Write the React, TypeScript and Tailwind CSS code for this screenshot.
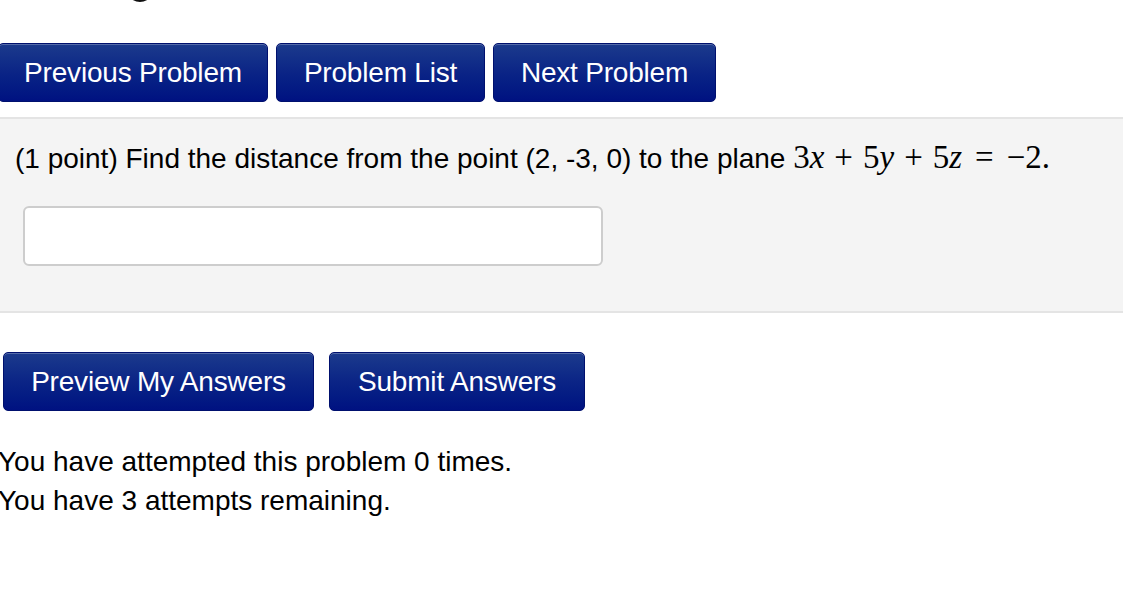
import React from "react";

const btn =
  "h-[59px] rounded-[5px] border border-[#00106e] bg-gradient-to-b from-[#1c3a8c] via-[#0b2486] to-[#001181] text-white text-[28px] leading-none tracking-[-0.2px] shadow-[inset_0_1px_0_rgba(255,255,255,0.25)]";

export default function App() {
  return (
    <div className="w-[1123px] h-[615px] bg-white overflow-hidden font-['Liberation_Sans',Arial,sans-serif] text-black">
      <div className="h-[43px] relative">
        <svg className="absolute left-[128px] top-[-6px]" width="24" height="10" viewBox="0 0 24 10">
          <path d="M3 3 Q12 10 21 3" stroke="#111" strokeWidth="3" fill="none" />
        </svg>
      </div>
      <div className="flex gap-[8px] ml-[-2px]">
        <button className={`${btn} w-[270px]`}>Previous Problem</button>
        <button className={`${btn} w-[209px]`}>Problem List</button>
        <button className={`${btn} w-[223px]`}>Next Problem</button>
      </div>
      <div className="mt-[15px] h-[196px] bg-[#f4f4f4] border-t-2 border-b-2 border-[#e4e4e4] px-[15px] pt-[20px]">
        <p className="text-[28px] leading-[36px] flex items-baseline">
          <span>(1 point) Find the distance from the point (2, -3, 0) to the plane&nbsp;</span>
          <span className="font-['Liberation_Serif','Times_New_Roman',serif] text-[33px] flex items-baseline">
            <span>3<i>x</i></span>
            <span className="mx-[10px]">+</span>
            <span>5<i>y</i></span>
            <span className="mx-[10px]">+</span>
            <span>5<i>z</i></span>
            <span className="mx-[13px]">=</span>
            <span>−2.</span>
          </span>
        </p>
        <div className="mt-[29px] ml-[8px] w-[580px] h-[60px] bg-white border-2 border-[#cdcdcd] rounded-[6px]"></div>
      </div>
      <div className="flex gap-[15px] ml-[3px] mt-[39px]">
        <button className={`${btn} w-[311px]`}>Preview My Answers</button>
        <button className={`${btn} w-[256px]`}>Submit Answers</button>
      </div>
      <div className="mt-[31px] ml-[-2px] text-[28px] leading-[39px]">
        <p>You have attempted this problem 0 times.</p>
        <p>You have 3 attempts remaining.</p>
      </div>
    </div>
  );
}
